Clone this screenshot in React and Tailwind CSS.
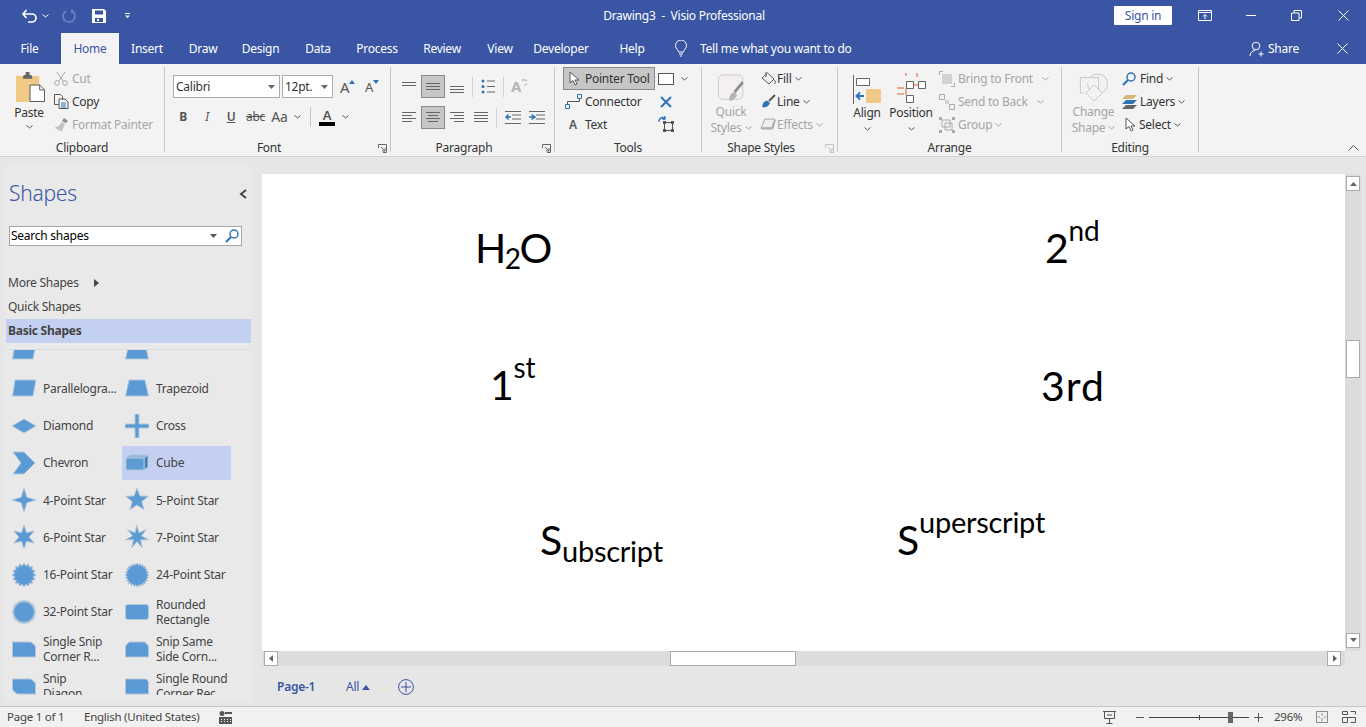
import React from 'react';

const FONT = { fontFamily: '"Noto Sans", "Open Sans", sans-serif' };

function starPoints(n, outer, inner) {
  const pts = [];
  for (let i = 0; i < n * 2; i++) {
    const r = i % 2 === 0 ? outer : inner;
    const a = (Math.PI * i) / n - Math.PI / 2;
    pts.push(`${(12 + r * Math.cos(a)).toFixed(2)},${(12 + r * Math.sin(a)).toFixed(2)}`);
  }
  return pts.join(' ');
}

// small icons
const Chev = ({ className = 'text-[#555]' }) => (
  <svg width="7" height="4" viewBox="0 0 7 4" className={`shrink-0 ${className}`} fill="none" stroke="currentColor">
    <path d="M.5.5l3 2.5 3-2.5" />
  </svg>
);

const Launcher = ({ off }) => (
  <svg width="9" height="9" viewBox="0 0 9 9" fill="none" stroke={off ? '#c4c4c4' : '#666'} className="absolute right-[3px] bottom-[3px]">
    <path d="M.5 4V.5h8v8H5M3 3l4 4M7 4v3H4" />
  </svg>
);

function Group({ w, label, launcher, launcherOff, children }) {
  return (
    <div className="relative flex flex-col h-[85px] border-r border-[#c6c6c6] shrink-0" style={{ width: w }}>
      <div className="flex h-[69px] shrink-0">{children}</div>
      <div className={`relative mt-[4px] shrink-0 text-center leading-[16px] text-[#333] ${launcher ? 'pr-[17px]' : ''}`}>
        {label}
        {launcher && <Launcher off={launcherOff} />}
      </div>
    </div>
  );
}

const Row = ({ children, className = '' }) => <div className={`flex items-center h-[23px] ${className}`}>{children}</div>;

const Lines = ({ rows }) => (
  <svg width="16" height="14" viewBox="0 0 16 14" stroke="#666" fill="none">
    {rows.map(([x1, x2, y], i) => <path key={i} d={`M${x1} ${y}.5H${x2}`} />)}
  </svg>
);

const AlignBtn = ({ on, rows, w = 'w-[24px]' }) => (
  <div className={`flex items-center justify-center ${w} h-[23px] border ${on ? 'bg-[#c6c6c6] border-[#8a8a8a]' : 'border-transparent'}`}>
    <Lines rows={rows} />
  </div>
);

const L3 = (y) => [[1, 15, y], [1, 15, y + 3], [1, 15, y + 6]];

function ShapeIcon({ kind }) {
  const blue = '#5b9bd5';
  const edge = '#b5c6d8';
  const p = { fill: blue, stroke: edge, strokeWidth: 1 };
  let el = null;
  if (kind === 'para') el = <polygon points="3,4 24,4 21,20 0.5,20" {...p} />;
  else if (kind === 'trap') el = <polygon points="4,4 20,4 23.5,20 0.5,20" {...p} />;
  else if (kind === 'diamond') el = <polygon points="12,5 24,12 12,19 0,12" {...p} />;
  else if (kind === 'cross') el = <polygon points="10,0 14,0 14,10 24,10 24,14 14,14 14,24 10,24 10,14 0,14 0,10 10,10" {...p} />;
  else if (kind === 'chevron') el = <polygon points="1,1 12,1 23,12 12,23 1,23 9,12" {...p} />;
  else if (kind === 'cube') {
    el = (
      <g>
        <polygon points="1,7 5,4 23,4 19,7" fill="#8fb5dc" stroke={edge} />
        <polygon points="19,7 23,4 23,16 19,19" fill="#3f7fbd" stroke={edge} />
        <rect x="1" y="7" width="18" height="12" {...p} />
      </g>
    );
  } else if (kind === 'rrect') el = <rect x="0.5" y="4.500" width="23" height="15" rx="2.5" {...p} />;
  else if (kind === 'snip1') el = <polygon points="0.5,5 19,5 23.5,9 23.5,20 0.5,20" {...p} />;
  else if (kind === 'snip2') el = <polygon points="4,5 20,5 23.5,9 23.5,20 0.5,20 0.5,9" {...p} />;
  else if (kind === 'snipd') el = <polygon points="0.5,5 19,5 23.5,9 23.5,20 5,20 0.5,16" {...p} />;
  else if (kind === 'round1') el = <path d="M.5 5H20Q23.5 5 23.5 9V20H.5Z" {...p} />;
  else if (kind === 's4') el = <polygon points={starPoints(4, 12, 4)} {...p} />;
  else if (kind === 's5') el = <polygon points={starPoints(5, 12, 5)} {...p} />;
  else if (kind === 's6') el = <polygon points={starPoints(6, 12, 5)} {...p} />;
  else if (kind === 's7') el = <polygon points={starPoints(7, 12, 4.6)} {...p} />;
  else if (kind === 's16') el = <polygon points={starPoints(16, 12, 9.5)} {...p} />;
  else if (kind === 's24') el = <polygon points={starPoints(24, 12, 10)} {...p} />;
  else if (kind === 's32') el = <polygon points={starPoints(32, 12, 9.8)} {...p} />;
  return <svg width="24" height="24" viewBox="0 0 24 24" className="shrink-0">{el}</svg>;
}

const SHAPES = [
  ['', 'para', 0], ['', 'trap', 0],
  ['Parallelogra...', 'para'], ['Trapezoid', 'trap'],
  ['Diamond', 'diamond'], ['Cross', 'cross'],
  ['Chevron', 'chevron'], ['Cube', 'cube', 1],
  ['4-Point Star', 's4'], ['5-Point Star', 's5'],
  ['6-Point Star', 's6'], ['7-Point Star', 's7'],
  ['16-Point Star', 's16'], ['24-Point Star', 's24'],
  ['32-Point Star', 's32'], ['Rounded Rectangle', 'rrect'],
  ['Single Snip Corner R...', 'snip1'], ['Snip Same Side Corn...', 'snip2'],
  ['Snip\nDiagon...', 'snipd'], ['Single Round Corner Rec...', 'round1'],
];

function TitleBar() {
  return (
    <div className="flex items-center h-[31px] text-white">
      <div className="flex items-center w-[1114px]">
        <svg width="18" height="16" viewBox="0 0 18 16" fill="none" stroke="#fff" strokeWidth="1.7" className="ml-[21px]">
          <path d="M2 6h9a4 4 0 0 1 0 8H7M5.5 2L2 6l3.5 4" />
        </svg>
        <div className="ml-[3px]"><Chev className="text-white" /></div>
        <svg width="16" height="16" viewBox="0 0 16 16" fill="none" stroke="#6f83bf" strokeWidth="1.7" className="ml-[12px]">
          <path d="M11 3A6 6 0 1 1 5 3M11 1v3.5h3" />
        </svg>
        <svg width="16" height="16" viewBox="0 0 16 16" className="ml-[14px]">
          <path fillRule="evenodd" fill="#fff" d="M1 1h12l2 2v12H1zM4 2.5v4h8v-4zM4 10v4h8v-4zM6 11h2v2H6z" />
        </svg>
        <svg width="7" height="7" viewBox="0 0 7 7" fill="#fff" className="ml-[17px]">
          <path d="M1 1h5v1H1zM1 3.5h5L3.5 6z" />
        </svg>
        <div className="ml-[468px] w-[170px] text-center whitespace-pre">Drawing3  -  Visio Professional</div>
      </div>
      <div className="flex items-center justify-center w-[58px] h-[19px] bg-white text-[#3955a3] rounded-[1px]">Sign in</div>
      <svg width="14" height="11" viewBox="0 0 14 11" fill="none" stroke="#fff" className="ml-[26px]">
        <path d="M.5.5h13v10H.5zM.5 2.5h13M7 9V4.5M5 6.5l2-2 2 2" />
      </svg>
      <div className="ml-[34px] w-[10px] h-px bg-white" />
      <svg width="11" height="11" viewBox="0 0 11 11" fill="none" stroke="#fff" className="ml-[35px]">
        <path d="M.5 3h7.5v7.5H.5zM3 3V.5h7.5V8H8" />
      </svg>
      <svg width="11" height="11" viewBox="0 0 11 11" fill="none" stroke="#fff" className="ml-[36px]">
        <path d="M.5.5l10 10M10.5.5l-10 10" />
      </svg>
    </div>
  );
}

function TabBar() {
  const tabs = [['Insert', 56], ['Draw', 56], ['Design', 59], ['Data', 56], ['Process', 62], ['Review', 68], ['View', 48], ['Developer', 74], ['Help', 68]];
  return (
    <div className="flex items-end h-[33px] text-white">
      <div className="flex items-center justify-center w-[59px] h-[31px] mr-[2px]">File</div>
      <div className="flex items-center justify-center w-[58px] h-[31px] bg-[#f3f3f3] text-[#3955a3]">Home</div>
      {tabs.map(([t, w]) => (
        <div key={t} className="flex items-center justify-center h-[31px]" style={{ width: w }}>{t}</div>
      ))}
      <div className="flex items-center h-[31px]">
        <svg width="14" height="17" viewBox="0 0 14 17" fill="none" stroke="#fff" className="ml-[8px]">
          <path d="M4.5 12c0-2-3-3.500-3-6.500a5.500 5.500 0 0 1 11 0c0 3-3 4.500-3 6.500zM5 14h4M6 16h2" />
        </svg>
        <span className="ml-[12px]">Tell me what you want to do</span>
      </div>
      <div className="flex items-center h-[31px] ml-auto">
        <svg width="16" height="16" viewBox="0 0 16 16" fill="none" stroke="#fff">
          <circle cx="7" cy="5" r="3.800" />
          <path d="M1 15c0-3 2-5 5-5.500M9.500 13h5M12 10.500v5" />
        </svg>
        <span className="ml-[3px]">Share</span>
        <svg width="11" height="11" viewBox="0 0 11 11" fill="none" stroke="#fff" className="ml-[38px] mr-[18px]">
          <path d="M.5.5l10 10M10.5.5l-10 10" />
        </svg>
      </div>
    </div>
  );
}

function Ribbon() {
  const gray = 'text-[#a6a6a6]';
  return (
    <div className="flex items-start h-[93px] bg-[#f3f3f3] border-b border-[#d2d2d2] pt-[3px] text-[#333]">
      <Group w={165} label="Clipboard">
        <div className="flex flex-col items-center w-[52px] ml-[3px] -mr-[1px] pt-[5px]">
          <svg width="29" height="30" viewBox="0 0 30 31" className="ml-[2px]">
            <path d="M0 4h24v27H0z" fill="#f0c987" />
            <path d="M8 3h2V0h4v3h2l1 4H7z" fill="#666" />
            <path d="M14.500 13.500h10l5 5v12h-15z" fill="#fff" stroke="#555" />
            <path d="M24.500 13.500v5h5" fill="none" stroke="#555" />
          </svg>
          <div className="mt-[3px] leading-[15px]">Paste</div>
          <div className="mt-[5px]"><Chev /></div>
        </div>
        <div className="flex flex-col">
          <Row className={gray}>
            <svg width="14" height="15" viewBox="0 0 14 15" fill="none" stroke="#a6a6a6" className="mr-[4px]">
              <path d="M3 1l6 9M11 1L5 10" /><circle cx="3" cy="12" r="2.300" /><circle cx="11" cy="12" r="2.300" />
            </svg>
            Cut
          </Row>
          <Row>
            <svg width="15" height="15" viewBox="0 0 15 15" fill="none" stroke="#555" className="mr-[3px]">
              <path d="M.5.5h6l2 2v3M.5.5v10h4M5 5h6l3 3v6.500H5z" />
              <path d="M7 9h5M7 11h5M7 13h5" stroke="#2f75b5" />
            </svg>
            Copy
          </Row>
          <Row className={gray}>
            <svg width="15" height="15" viewBox="0 0 15 15" className="mr-[3px]">
              <path d="M10 1l4 3-2 2-4-2z" fill="#8c8c8c" />
              <path d="M8 5l3 2-3 7c-3 0-6-2-7-4 3 0 5-2 7-5z" fill="#c4c4c4" />
            </svg>
            Format Painter
          </Row>
        </div>
      </Group>

      <Group w={226} label="Font" launcher>
        <div className="flex flex-col pl-[8px] pt-[8px]">
          <div className="flex items-center">
            <div className="flex items-center justify-between w-[107px] h-[23px] bg-white border border-[#ababab] pl-[2px] pr-[4px]">
              Calibri
              <svg width="7" height="4"><path d="M0 0h7L3.500 4z" fill="#666" /></svg>
            </div>
            <div className="flex items-center justify-between w-[51px] h-[23px] ml-[2px] bg-white border border-[#ababab] pl-[2px] pr-[4px]">
              12pt.
              <svg width="7" height="4"><path d="M0 0h7L3.500 4z" fill="#666" /></svg>
            </div>
            <div className="flex items-end w-[18px] ml-[7px] text-[15px] leading-[16px] text-[#555]">A<svg width="6" height="4" className="mb-[11px]"><path d="M0 4h6L3 0z" fill="#2f75b5" /></svg></div>
            <div className="flex items-end w-[18px] ml-[7px] text-[13px] leading-[14px] text-[#555]">A<svg width="6" height="4" className="mb-[10px]"><path d="M0 0h6L3 4z" fill="#2f75b5" /></svg></div>
          </div>
          <div className="flex items-center h-[23px] mt-[7px] -ml-[2px] text-[#555]">
            <span className="w-[24px] text-center font-bold">B</span>
            <span className="w-[24px] text-center italic">I</span>
            <span className="w-[24px] text-center underline font-semibold">U</span>
            <span className="w-[25px] text-center line-through">abc</span>
            <span className="w-[23px] text-center text-[14px]">Aa</span>
            <div className="ml-[3px]"><Chev /></div>
            <div className="ml-[9px] w-px h-[20px] bg-[#c6c6c6]" />
            <div className="flex flex-col items-center ml-[8px] w-[16px]">
              <span className="font-semibold text-[13px] leading-[14px]">A</span>
              <div className="w-[16px] h-[4px] bg-black" />
            </div>
            <div className="ml-[7px]"><Chev /></div>
          </div>
        </div>
      </Group>

      <Group w={164} label="Paragraph" launcher>
        <div className="flex flex-col pl-[6px] pt-[8px] gap-[8px]">
          <div className="flex items-center">
            <AlignBtn rows={[[1, 15, 2], [1, 15, 5]]} />
            <AlignBtn on rows={L3(3)} />
            <AlignBtn rows={[[1, 15, 6], [1, 15, 9], [1, 15, 12]]} />
            <div className="w-px h-[20px] ml-[3px] bg-[#d2d2d2]" />
            <div className="flex items-center justify-center w-[30px]">
              <svg width="14" height="15" viewBox="0 0 14 15" fill="none">
                <circle cx="2" cy="2" r="1.500" fill="#2f75b5" /><circle cx="2" cy="7.500" r="1.500" fill="#2f75b5" /><circle cx="2" cy="13" r="1.500" fill="#2f75b5" />
                <path d="M6 2h8M6 7.500h8M6 13h8" stroke="#666" />
              </svg>
            </div>
            <div className="w-px h-[20px] bg-[#d2d2d2]" />
            <div className="flex items-center justify-center w-[30px] text-[#b5b5b5] font-bold text-[15px]">
              A
              <svg width="6" height="7" viewBox="0 0 6 7" fill="none" stroke="#b5b5b5" className="-mt-[8px]"><path d="M1 1h3a2 2 0 0 1 0 5H3M2.500 0L1 1l1.500 1" /></svg>
            </div>
          </div>
          <div className="flex items-center">
            <AlignBtn rows={[[1, 15, 1], [1, 11, 4], [1, 15, 7], [1, 11, 10]]} />
            <AlignBtn on rows={[[1, 15, 1], [3, 13, 4], [1, 15, 7], [3, 13, 10]]} />
            <AlignBtn rows={[[1, 15, 1], [5, 15, 4], [1, 15, 7], [5, 15, 10]]} />
            <AlignBtn rows={[[1, 15, 1], [1, 15, 4], [1, 15, 7], [1, 15, 10]]} />
            <div className="w-px h-[20px] ml-[3px] bg-[#d2d2d2]" />
            <div className="flex items-center justify-center w-[31px]">
              <svg width="16" height="13" viewBox="0 0 16 13" fill="none">
                <path d="M0 .5h16M7 4h9M7 8h9M0 12.500h16" stroke="#666" />
                <path d="M6 6H1M3.500 3.500L1 6l2.500 2.500" stroke="#2f75b5" strokeWidth="1.500" />
              </svg>
            </div>
            <div className="flex items-center justify-center w-[18px]">
              <svg width="16" height="13" viewBox="0 0 16 13" fill="none">
                <path d="M0 .5h16M7 4h9M7 8h9M0 12.500h16" stroke="#666" />
                <path d="M0 6h5M2.500 3.500L6 6 2.500 8.500" stroke="#2f75b5" strokeWidth="1.500" />
              </svg>
            </div>
          </div>
        </div>
      </Group>

      <Group w={147} label="Tools">
        <div className="flex flex-col pl-[8px]">
          <div className="flex items-center w-[92px] h-[23px] bg-[#c6c6c6] border border-[#8a8a8a] pl-[5px]">
            <svg width="11" height="15" viewBox="0 0 11 15" fill="#fff" stroke="#555" className="mr-[5px]">
              <path d="M1 1v11l3-2.500L6 14l2-1-2-4h4z" />
            </svg>
            Pointer Tool
          </div>
          <Row className="pl-[2px]">
            <svg width="17" height="15" viewBox="0 0 17 15" fill="none" stroke="#2f75b5" className="mr-[3px]">
              <path d="M.5 10.500h4v4h-4zM12.500.5h4v4h-4z" /><path d="M2.500 10.500V7.500h12v-3" stroke="#555" />
            </svg>
            Connector
          </Row>
          <Row className="pl-[6px]">
            <span className="w-[16px] font-semibold text-[#555]">A</span>Text
          </Row>
        </div>
        <div className="flex flex-col pl-[3px]">
          <div className="flex items-center h-[23px]">
            <div className="w-[16px] h-[12px] bg-white border border-[#555]" />
            <div className="ml-[7px]"><Chev /></div>
          </div>
          <Row className="pl-[1px]">
            <svg width="12" height="12" viewBox="0 0 12 12" fill="none" stroke="#2f75b5" strokeWidth="2" className="ml-[1px]"><path d="M1 1l10 10M11 1L1 11" /></svg>
          </Row>
          <Row>
            <svg width="17" height="17" viewBox="0 0 17 17" fill="none">
              <path d="M6.500 6.500h8v8h-8z" stroke="#555" />
              <path d="M5 5h3v3H5zM13 5h3v3h-3zM5 13h3v3H5zM13 13h3v3h-3z" fill="#555" />
              <path d="M1 6a4 4 0 0 1 6-4M7 0v3H4" stroke="#2f75b5" strokeWidth="1.300" />
            </svg>
          </Row>
        </div>
      </Group>

      <Group w={136} label="Shape Styles" launcher launcherOff>
        <div className="flex flex-col items-center w-[58px] pt-[7px] text-[#a6a6a6] leading-[16px]">
          <svg width="30" height="31" viewBox="0 0 30 31" fill="none" className="mb-[2px]">
            <rect x="1" y="1" width="27" height="27" rx="5" fill="#f3eff3" stroke="#c8c8c8" />
            <path d="M28 9L19 20" stroke="#8c8c8c" strokeWidth="3" />
            <path d="M13 30c0-6 2-10 7-10 1 2 2 3 1 5-2 3-5 5-8 5z" fill="#b5b5b5" />
          </svg>
          <div>Quick</div>
          <div className="flex items-center gap-[3px]">Styles <Chev className="text-[#a6a6a6]" /></div>
        </div>
        <div className="flex flex-col">
          <Row>
            <svg width="16" height="16" viewBox="0 0 16 16" fill="none" stroke="#555" className="mr-[1px]">
              <path d="M7.500 2l6.500 6-5 5-7-6zM6 1v5" /><path d="M14.500 9c1 2 1 3 0 4" />
            </svg>
            Fill <div className="ml-[3px]"><Chev /></div>
          </Row>
          <Row>
            <svg width="16" height="15" viewBox="0 0 16 15" className="mr-[1px]">
              <path d="M15 1L9 7" stroke="#555" strokeWidth="2" />
              <path d="M2 13c1-5 3-7 6-6l2 2c-2 4-4 5-8 4z" fill="#2f75b5" />
            </svg>
            Line <div className="ml-[3px]"><Chev /></div>
          </Row>
          <Row className={gray}>
            <svg width="16" height="15" viewBox="0 0 16 15" className="mr-[1px]">
              <path d="M5 2h9a1 1 0 0 1 1 1l-2 8a1 1 0 0 1-1 1H2a1 1 0 0 1-1-1z" fill="#eee" stroke="#a6a6a6" />
              <path d="M1 11h11l3-8" fill="none" stroke="#a6a6a6" strokeWidth="1.500" />
            </svg>
            Effects <div className="ml-[3px]"><Chev className="text-[#a6a6a6]" /></div>
          </Row>
        </div>
      </Group>

      <Group w={224} label="Arrange">
        <div className="flex flex-col items-center w-[42px] ml-[8px] pt-[6px] leading-[16px]">
          <svg width="28" height="31" viewBox="0 0 28 31" fill="none">
            <path d="M.5 2v29" stroke="#666" />
            <path d="M3.500 5.500h13v7h-13z" stroke="#666" fill="#fff" />
            <path d="M13 16h15v14H13z" fill="#f0c987" />
            <path d="M11 23H4M7 19.500L3.500 23 7 26.500" stroke="#2f75b5" strokeWidth="2" />
          </svg>
          <div className="mt-[1px]">Align</div>
          <div className="mt-[6px]"><Chev /></div>
        </div>
        <div className="flex flex-col items-center w-[46px] pt-[6px] leading-[16px]">
          <svg width="30" height="31" viewBox="0 0 30 31" fill="none">
            <path d="M10 0v3M21 0v4M1 15h7M1 21h7M10 15v7" stroke="#e05a33" />
            <path d="M10.500 8.500h7v7h-7zM22.500 8.500h7v7h-7zM10.500 22.500h7v7h-7z" stroke="#666" fill="#fff" />
            <path d="M17.500 12h5" stroke="#e05a33" />
          </svg>
          <div className="mt-[1px]">Position</div>
          <div className="mt-[6px]"><Chev /></div>
        </div>
        <div className="flex flex-col ml-[5px] text-[#a6a6a6]">
          <Row>
            <svg width="16" height="16" viewBox="0 0 16 16" className="mr-[3px]" fill="none">
              <path d="M.5 4V.5H4M15.500 12v3.500H12" stroke="#aaa" /><path d="M3 3h10v10H3z" fill="#d2d2d2" />
            </svg>
            Bring to Front <div className="ml-[9px]"><Chev className="text-[#a6a6a6]" /></div>
          </Row>
          <Row>
            <svg width="16" height="16" viewBox="0 0 16 16" className="mr-[3px]" fill="none">
              <path d="M.5.5h5v5h-5zM10.500 10.500h5v5h-5z" stroke="#aaa" /><path d="M6 6h4v4H6z" fill="#d2d2d2" />
            </svg>
            Send to Back <div className="ml-[9px]"><Chev className="text-[#a6a6a6]" /></div>
          </Row>
          <Row>
            <svg width="16" height="16" viewBox="0 0 16 16" className="mr-[3px]" fill="none">
              <path d="M3 3h8v7H3zM6 6h7v7H6z" stroke="#aaa" />
              <path d="M0 0h3v3H0zM13 0h3v3h-3zM0 13h3v3H0zM13 13h3v3h-3z" fill="#aaa" />
            </svg>
            Group <div className="ml-[3px]"><Chev className="text-[#a6a6a6]" /></div>
          </Row>
        </div>
      </Group>

      <Group w={137} label="Editing">
        <div className="flex flex-col items-center w-[60px] pl-[3px] pt-[6px] text-[#a6a6a6] leading-[16px]">
          <svg width="32" height="32" viewBox="0 0 32 32" fill="none" className="mb-[2px]">
            <circle cx="20" cy="12" r="11" fill="#f3eff3" stroke="#c4c4c4" />
            <path d="M1 5h20v17" stroke="#c4c4c4" fill="#f3f3f3" />
            <path d="M1 5v17h4" stroke="#c4c4c4" />
            <path d="M16 13l9 9-9 9-9-9z" fill="#f3f3f3" stroke="#c4c4c4" />
          </svg>
          <div>Change</div>
          <div className="flex items-center gap-[3px]">Shape <Chev className="text-[#a6a6a6]" /></div>
        </div>
        <div className="flex flex-col">
          <Row>
            <svg width="14" height="14" viewBox="0 0 14 14" fill="none" stroke="#2f75b5" className="mr-[4px]">
              <circle cx="9" cy="5" r="4" strokeWidth="1.500" /><path d="M6 8l-5 5" strokeWidth="2.200" />
            </svg>
            Find <div className="ml-[3px]"><Chev /></div>
          </Row>
          <Row>
            <svg width="15" height="14" viewBox="0 0 15 14" className="mr-[3px]">
              <path d="M4 0h11l-4 4H0z" fill="#d8b676" /><path d="M4 5h11l-4 4H0z" fill="#2f75b5" /><path d="M4 10h11l-4 4H0z" fill="#666" />
            </svg>
            Layers <div className="ml-[3px]"><Chev /></div>
          </Row>
          <Row>
            <svg width="11" height="15" viewBox="0 0 11 15" fill="#fff" stroke="#555" className="ml-[3px] mr-[3px]">
              <path d="M1 1v11l3-2.500L6 14l2-1-2-4h4z" />
            </svg>
            Select <div className="ml-[3px]"><Chev /></div>
          </Row>
        </div>
      </Group>

      <div className="flex-1 flex justify-end items-end h-[85px] pr-[7px]">
        <svg width="11" height="6" viewBox="0 0 11 6" fill="none" stroke="#555" className="mb-[1px]"><path d="M.5 5.500l5-5 5 5" /></svg>
      </div>
    </div>
  );
}

function Sidebar() {
  return (
    <div className="flex flex-col w-[247px] h-[538px] ml-[5px] mt-[7px] bg-[#e9e9e9] text-[#444]">
      <div className="flex items-center justify-between h-[52px] pl-[4px] pr-[5px] pt-[8px]">
        <span className="text-[21px] font-light text-[#3955a3]">Shapes</span>
        <svg width="8" height="10" viewBox="0 0 8 10" fill="none" stroke="#444" strokeWidth="2"><path d="M7 1L2 5l5 4" /></svg>
      </div>
      <div className="flex items-center justify-between w-[233px] h-[20px] ml-[4px] mt-[10px] bg-white border border-[#a6a6a6] pl-[1px] pr-[2px] text-black">
        Search shapes
        <div className="flex items-center gap-[8px]">
          <svg width="7" height="4"><path d="M0 0h7L3.500 4z" fill="#555" /></svg>
          <svg width="14" height="14" viewBox="0 0 14 14" fill="none" stroke="#2f75b5">
            <circle cx="9" cy="5" r="4" strokeWidth="1.500" /><path d="M6 8l-5 5" strokeWidth="2" />
          </svg>
        </div>
      </div>
      <div className="flex items-center h-[24px] mt-[25px] pl-[3px]">
        More Shapes
        <svg width="5" height="8" className="ml-[15px]"><path d="M0 0l5 4-5 4z" fill="#444" /></svg>
      </div>
      <div className="flex items-center h-[24px] pl-[3px]">Quick Shapes</div>
      <div className="flex items-center h-[24px] pl-[2px] ml-px bg-[#c3d0f1] font-bold w-[245px]">Basic Shapes</div>
      <div className="w-[245px] ml-px mt-[6px] h-px bg-[#dcdcdc]" />
      <div className="h-[345px] overflow-hidden">
        <div className="grid grid-cols-[113px_113px] -mt-[17.5px] pl-[4px] auto-rows-[37.25px] leading-[15px]">
          {SHAPES.map(([name, kind, on], i) => (
            <div key={i} className={`flex items-center pl-[3px] ${on ? 'bg-[#c3d0f1] mr-[4px] my-[2px]' : ''}`}>
              <ShapeIcon kind={kind} />
              <span className="ml-[7px] w-[76px] whitespace-pre-line">{name}</span>
            </div>
          ))}
        </div>
      </div>
    </div>
  );
}

const ScrollBtn = ({ d, className = '' }) => (
  <div className={`flex items-center justify-center w-[14px] h-[15px] bg-white border border-[#ababab] shrink-0 ${className}`}>
    <svg width="7" height="7" viewBox="0 0 7 7"><path d={d} fill="#666" /></svg>
  </div>
);

function Canvas() {
  const base = 'absolute text-[41px] leading-[50px] whitespace-nowrap';
  return (
    <div className="relative flex-1 bg-white text-black overflow-hidden" style={{ fontFamily: 'Lato, "Open Sans", sans-serif' }}>
      <div className={`${base} left-[213px] top-[49px] tracking-[-1.5px]`}>H<sub className="static text-[28px] align-[-6px] leading-[0]">2</sub>O</div>
      <div className={`${base} left-[783px] top-[49px]`}>2<sup className="static text-[28px] align-[22px] leading-[0]">nd</sup></div>
      <div className={`${base} left-[228px] top-[186px]`}>1<sup className="static text-[28px] align-[22px] leading-[0]">st</sup></div>
      <div className={`${base} left-[779px] top-[187px] tracking-[1px]`}>3rd</div>
      <div className={`${base} left-[278px] top-[341px]`}>S<sub className="static text-[29px] align-[-7px] leading-[0]">ubscript</sub></div>
      <div className={`${base} left-[635px] top-[341px]`}>S<sup className="static text-[29px] align-[22px] leading-[0]">uperscript</sup></div>
    </div>
  );
}

export default function App() {
  return (
    <div className="flex flex-col w-[1366px] h-[727px] overflow-hidden bg-[#e6e6e6] text-[12px] tracking-[-0.25px]" style={FONT}>
      <div className="bg-[#3955a3]">
        <TitleBar />
        <TabBar />
      </div>
      <Ribbon />
      <div className="flex flex-1 min-h-0">
        <Sidebar />
        <div className="flex flex-col w-[1104px] ml-[10px]">
          <div className="flex h-[478px] mt-[17px]">
            <Canvas />
            <div className="flex flex-col items-center w-[16px] bg-[#dcdcdc] pt-[2px] pb-[3px] shrink-0 mr-[5px]">
              <ScrollBtn d="M0 6l3.500-4L7 6z" />
              <div className="w-[14px] h-[38px] mt-[149px] bg-white border border-[#ababab]" />
              <ScrollBtn d="M0 1l3.500 4L7 1z" className="mt-auto" />
            </div>
          </div>
          <div className="flex items-center h-[15px] w-[1083px] bg-[#dcdcdc] pl-[2px] pr-[4px]">
            <ScrollBtn d="M5 0L1 3.500 5 7z" />
            <div className="w-[126px] h-[15px] ml-[392px] bg-white border border-[#ababab]" />
            <ScrollBtn d="M2 0l4 3.500L2 7z" className="ml-auto" />
          </div>
          <div className="flex items-center h-[40px] pt-[2px]">
            <div className="w-[71px] pl-[15px] font-semibold text-[#3955a3]">Page-1</div>
            <div className="flex items-center ml-[13px] text-[#3955a3]">
              All
              <svg width="8" height="5" className="ml-[3px]"><path d="M0 5l4-5 4 5z" fill="#3955a3" /></svg>
            </div>
            <svg width="16" height="16" viewBox="0 0 16 16" fill="none" stroke="#3955a3" className="ml-[28px]">
              <circle cx="8" cy="8" r="7.400" /><path d="M3 8h10M8 3v10" />
            </svg>
          </div>
        </div>
      </div>
      <div className="flex items-center h-[21px] bg-[#f1f1f1] border-t border-[#c6c6c6] text-[#444] text-[11.5px]">
        <span className="ml-[7px] w-[77px]">Page 1 of 1</span>
        <span className="w-[135px]">English (United States)</span>
        <svg width="13" height="13" viewBox="0 0 13 13" fill="#555">
          <circle cx="3" cy="2.500" r="2.500" /><path d="M6 1h7v2H6zM0 6h13v7H0z" />
          <path d="M2 8h1v1H2zM5 8h1v1H5zM8 8h1v1H8zM11 8h1v1h-1zM2 10h1v1H2zM5 10h1v1H5zM8 10h1v1H8zM11 10h1v1h-1z" fill="#fff" />
        </svg>
        <svg width="13" height="13" viewBox="0 0 13 13" fill="none" stroke="#555" className="ml-[871px]">
          <path d="M0 .5h13M1.500 1v6.500h10V1M6.500 8v4M3.500 12.500h6M4 4h5" />
        </svg>
        <div className="ml-[20px] w-[8px] h-px bg-[#555]" />
        <div className="relative flex items-center w-[100px] h-px ml-[5px] bg-[#444]">
          <div className="absolute left-[50px] w-px h-[5px] bg-[#444]" />
          <div className="absolute left-[79px] w-[5px] h-[11px] bg-[#666]" />
        </div>
        <svg width="9" height="9" viewBox="0 0 9 9" stroke="#555" className="ml-[5px]"><path d="M0 4.500h9M4.500 0v9" /></svg>
        <span className="ml-[11px] w-[28px]">296%</span>
        <svg width="12" height="12" viewBox="0 0 12 12" fill="none" stroke="#888" className="ml-[14px]">
          <path d="M.5.5h11v11H.5zM6 2v3M6 7v3M2 6h2M8 6h2" />
        </svg>
        <svg width="14" height="12" viewBox="0 0 14 12" fill="none" stroke="#555" className="ml-[14px]">
          <path d="M.5.5h5v3h-5zM8.500.5h5M13.500.5v3M.5 6.500h13M.5 6.500v5h5v-5M8.500 11.500h5v-5" />
        </svg>
      </div>
    </div>
  );
}
